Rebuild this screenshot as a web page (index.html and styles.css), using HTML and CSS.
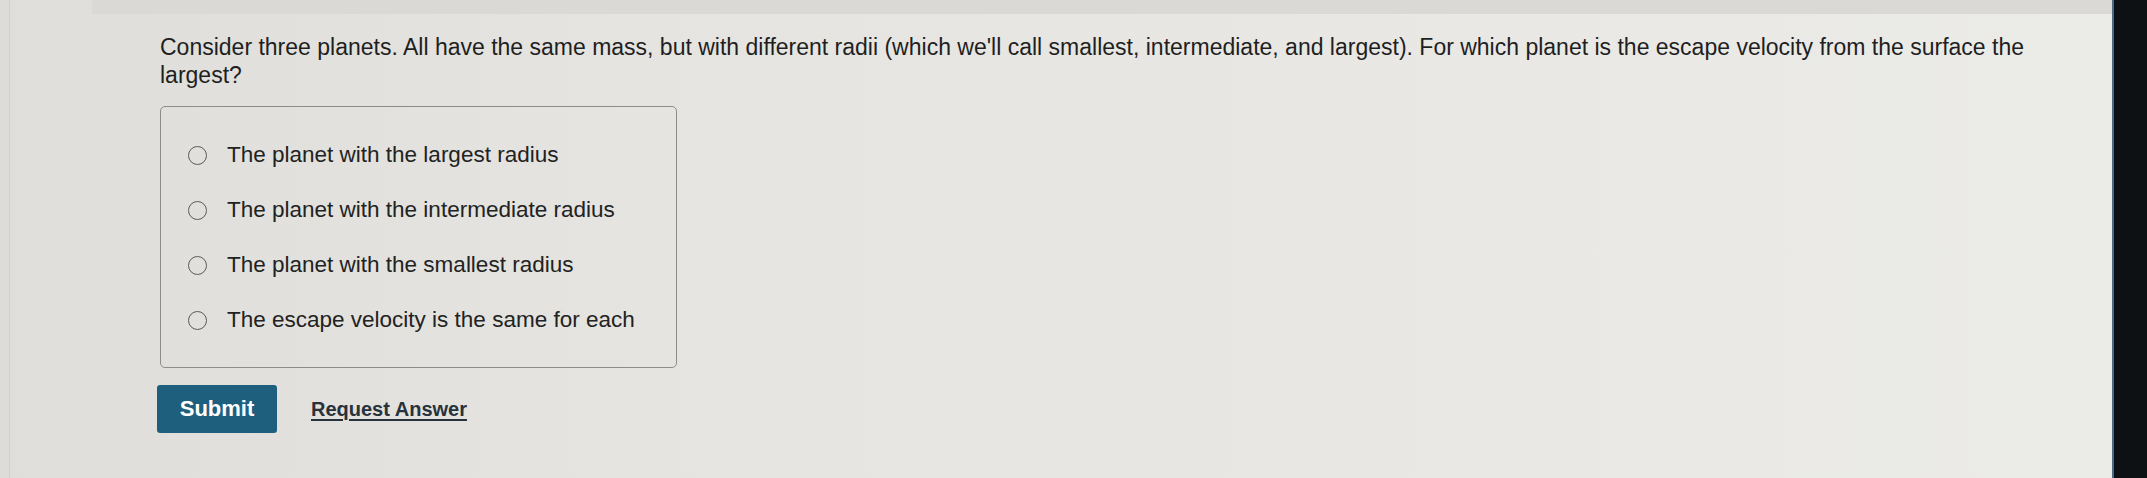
FILE: index.html
```html
<!DOCTYPE html>
<html lang="en">
<head>
<meta charset="utf-8">
<title>Escape velocity question</title>
<link rel="stylesheet" href="styles.css">
</head>
<body>
<div class="screen">
  <div class="page">
    <div class="top-band"></div>
    <div class="content">
      <p class="question">Consider three planets. All have the same mass, but with different radii (which we'll call smallest, intermediate, and largest). For which planet is the escape velocity from the surface the largest?</p>
      <div class="choices">
        <label class="choice"><span class="radio"></span><span class="choice-text">The planet with the largest radius</span></label>
        <label class="choice"><span class="radio"></span><span class="choice-text">The planet with the intermediate radius</span></label>
        <label class="choice"><span class="radio"></span><span class="choice-text">The planet with the smallest radius</span></label>
        <label class="choice"><span class="radio"></span><span class="choice-text">The escape velocity is the same for each</span></label>
      </div>
      <div class="actions">
        <button class="submit" type="button">Submit</button>
        <a class="request" href="#">Request Answer</a>
      </div>
    </div>
  </div>
  <div class="bezel"></div>
</div>
</body>
</html>
```

FILE: styles.css
```css
html, body {
  margin: 0;
  padding: 0;
  height: 100%;
}
body {
  background: #dedcd8;
  font-family: "Liberation Sans", Arial, sans-serif;
  color: #1e1e1e;
  overflow: hidden;
}
.screen {
  display: flex;
  height: 478px;
  width: 2147px;
}
.page {
  flex: 1;
  margin-left: 9px;
  border-left: 1px solid #d2d1cd;
  background: linear-gradient(90deg, #dfdeda 0%, #e5e4e0 30%, #e9e8e5 70%, #ebebe8 100%);
  display: flex;
  flex-direction: column;
}
.top-band {
  height: 14px;
  margin-left: 82px;
  background: #dad9d5;
  flex: none;
}
.content {
  padding: 19px 40px 0 150px;
}
.question {
  margin: 0;
  font-size: 23px;
  line-height: 28px;
  color: #1f1f1f;
}
.choices {
  margin-top: 17px;
  width: 517px;
  box-sizing: border-box;
  border: 1.5px solid #8c8c8a;
  border-radius: 5px;
  padding: 34px 0 33px 27px;
  display: flex;
  flex-direction: column;
  gap: 27px;
}
.choice {
  display: flex;
  align-items: center;
  height: 28px;
  font-size: 22.5px;
  color: #222;
}
.radio {
  width: 17px;
  height: 17px;
  border: 1.6px solid #5a5a5a;
  border-radius: 50%;
  flex: none;
  margin-right: 20px;
}
.actions {
  margin-top: 17px;
  margin-left: -3px;
  display: flex;
  align-items: center;
  gap: 34px;
}
.submit {
  width: 120px;
  height: 48px;
  background: #1f5f7e;
  border: none;
  border-radius: 3px;
  color: #fff;
  font-family: "Liberation Sans", Arial, sans-serif;
  font-weight: bold;
  font-size: 22px;
  padding: 0;
}
.request {
  font-size: 20px;
  font-weight: bold;
  color: #27323c;
  text-decoration: underline;
  text-underline-offset: 3px;
}
.bezel {
  width: 35px;
  flex: none;
  background: #0e1113;
  border-left: 2px solid #4a6a85;
  box-sizing: border-box;
}
```
